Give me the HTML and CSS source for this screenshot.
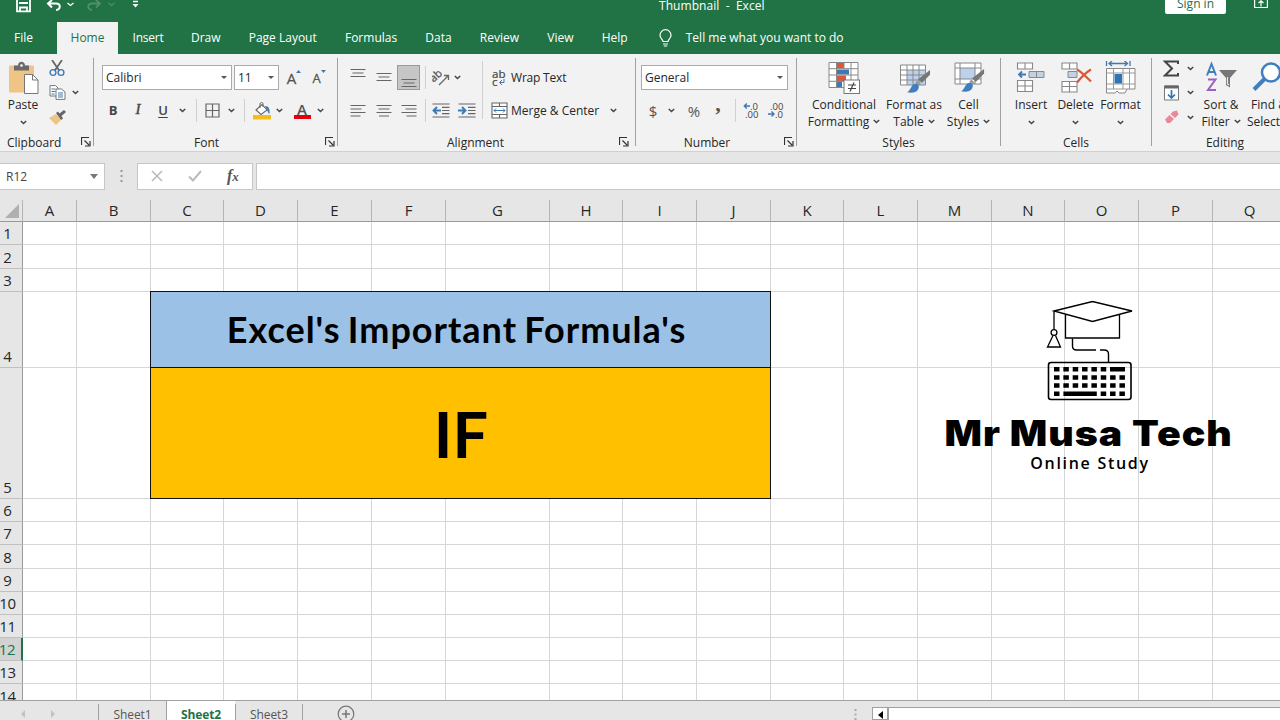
FILE: index.html
```html
<!DOCTYPE html>
<html lang="en">
<head>
    <meta charset="UTF-8">
    <title>Thumbnail - Excel</title>
    <link rel="stylesheet" href="styles.css">
</head>
<body>
    <svg class="defs" width="0" height="0">
        <symbol id="chev" viewBox="0 0 7 5"><path d="M.8 1l2.7 2.5L6.2 1" fill="none" stroke="#444" stroke-width="1.5"/></symbol>
        <symbol id="launch" viewBox="0 0 10 10"><path d="M.5 8V.5H8M3.5 3.5L8 8M9 4v5H4" fill="none" stroke="#333" stroke-width="1.2"/></symbol>
        <symbol id="brush" viewBox="0 0 26 26"><path d="M25 0v5l-9 9-4-4z" fill="#777"/><path d="M11 11l4 4-2 2-4-3z" fill="#999"/><path d="M0 24c4-1 4-8 9-9 3 0 5 3 3 6-2 4-8 4-12 3z" fill="#3f7fbf"/></symbol>
    </svg>

    <header class="titlebar">
        <div class="quick">
            <svg width="15" height="14" viewBox="0 0 15 14"><path d="M1 0v11.300h13V0M4 11V7.500h7v3.500M3 3h9" fill="none" stroke="#fff" stroke-width="1.8"/></svg>
            <svg width="16" height="12" viewBox="0 0 16 12"><path d="M2 3.500h8c5 0 5 6 0 6.500M6 0L2 3.500l4 4" fill="none" stroke="#fff" stroke-width="2"/></svg>
            <svg class="light" width="7" height="5" viewBox="0 0 7 5"><path d="M.5 1l3 2.500 3-2.500" fill="none" stroke="#fff" stroke-width="1.300"/></svg>
            <svg width="16" height="12" viewBox="0 0 16 12"><path d="M14 3.500H6c-5 0-5 6 0 6.500M10 0l4 3.500-4 4" fill="none" stroke="#4f9069" stroke-width="1.800"/></svg>
            <svg class="light" width="7" height="5" viewBox="0 0 7 5"><path d="M.5 1l3 2.500 3-2.500" fill="none" stroke="#4f9069" stroke-width="1.300"/></svg>
            <svg width="7" height="10" viewBox="0 0 7 10"><path d="M1 1.500h5" stroke="#fff" stroke-width="1.500"/><path d="M.5 4h6l-3 3.500z" fill="#fff"/></svg>
        </div>
        <div class="doc-title">Thumbnail&nbsp; -&nbsp; Excel</div>
        <button class="signin">Sign in</button>
        <svg class="ribbon-opt" width="14" height="9" viewBox="0 0 14 9"><path d="M.6 0v7.500h12.800V0M7 6.500V1M4.500 3L7 .800 9.500 3" fill="none" stroke="#fff" stroke-width="1.200"/></svg>
    </header>

    <nav class="tabs">
        <span class="tab">File</span>
        <span class="tab active">Home</span>
        <span class="tab insert">Insert</span>
        <span class="tab">Draw</span>
        <span class="tab">Page Layout</span>
        <span class="tab">Formulas</span>
        <span class="tab">Data</span>
        <span class="tab">Review</span>
        <span class="tab">View</span>
        <span class="tab">Help</span>
        <svg class="bulb" width="13" height="18" viewBox="0 0 13 18"><path d="M4 12.500c0-2-3-3-3-6.300a5.500 5.500 0 0 1 11 0c0 3.300-3 4.300-3 6.300zM4 15h5M4.800 17h3.400" fill="none" stroke="#fff" stroke-width="1.200"/></svg>
        <span class="tell">Tell me what you want to do</span>
    </nav>

    <section class="ribbon">
        <div class="group clipboard">
            <div class="tools">
                <div class="big">
                    <svg width="32" height="33" viewBox="0 0 32 33"><rect x="2" y="4" width="25" height="27" rx="1" fill="#eec584"/><path d="M7 4h4c0-5 7-5 7 0h4v5H7z" fill="#6a6a6a"/><circle cx="14.500" cy="4" r="1.300" fill="#fff"/><path d="M17.500 13h8l5.500 5.500V32H17.500z" fill="#fff" stroke="#777"/><path d="M25.500 13v5.500H31" fill="none" stroke="#777"/></svg>
                    <span>Paste</span>
                    <svg class="chev"><use href="#chev"/></svg>
                </div>
                <div class="small">
                    <svg width="16" height="17" viewBox="0 0 16 17"><path d="M3 0l7.500 11M13 0L5.500 11" stroke="#666" stroke-width="1.800"/><circle cx="4" cy="12.500" r="2.900" fill="none" stroke="#3f78b5" stroke-width="1.400"/><circle cx="12" cy="12.500" r="2.900" fill="none" stroke="#3f78b5" stroke-width="1.400"/></svg>
                    <i></i>
                    <svg width="17" height="15" viewBox="0 0 17 15"><path d="M1 .600h5.500L9 3v8H1z" fill="#fff" stroke="#777"/><path d="M2.500 4h4M2.500 6.500h4M2.500 9h3" stroke="#3f78b5"/><path d="M7 4h5.500L16 7v7.400H7z" fill="#fff" stroke="#777"/><path d="M9 8h5M9 10h5M9 12h5" stroke="#3f78b5"/></svg>
                    <svg class="chev"><use href="#chev"/></svg>
                    <svg width="17" height="15" viewBox="0 0 17 15"><path d="M0 8l7-4 5 6-5 5z" fill="#eec584"/><path d="M7 3l5 7 2-1.500-1.500-2.500L17 2l-2-2-4.500 3.500L9 1.500z" fill="#666"/></svg>
                    <i></i>
                </div>
            </div>
            <div class="caption"><span>Clipboard</span><svg class="launch"><use href="#launch"/></svg></div>
        </div>

        <div class="group font">
            <div class="tools stacked">
                <div class="row font-top">
                    <div class="combo">Calibri<b class="arrow"></b></div>
                    <div class="combo">11<b class="arrow"></b></div>
                    <div class="grow-font">A<svg width="5" height="3" viewBox="0 0 5 3"><path d="M0 3L2.500 0 5 3z" fill="#3f78b5"/></svg></div>
                    <div class="grow-font shrink">A<svg width="5" height="3" viewBox="0 0 5 3"><path d="M0 0l2.500 3L5 0z" fill="#3f78b5"/></svg></div>
                </div>
                <div class="row font-bottom">
                    <span class="fmt bold">B</span>
                    <span class="fmt italic">I</span>
                    <span class="fmt under">U</span>
                    <svg class="chev"><use href="#chev"/></svg>
                    <i class="sep"></i>
                    <svg width="15" height="15" viewBox="0 0 15 15"><path d="M1 1h13v13H1zM7.500 1v13M1 7.500h13" fill="none" stroke="#666" stroke-width="1.200"/></svg>
                    <svg class="chev"><use href="#chev"/></svg>
                    <i class="sep"></i>
                    <svg width="18" height="18" viewBox="0 0 18 18"><path d="M3 8l6-5.500 5 5.500-6 4.500z" fill="#fff" stroke="#666" stroke-width="1.100"/><path d="M7 6V2c0-2 3-2 3 0v3" fill="none" stroke="#666"/><path d="M12 4c4 0 5 3 4.500 8-2-1-1.500-3-2.500-4z" fill="#3f78b5"/><rect x="0" y="13" width="18" height="4.500" fill="#f4be1a"/></svg>
                    <svg class="chev"><use href="#chev"/></svg>
                    <div class="font-color">A</div>
                    <svg class="chev"><use href="#chev"/></svg>
                </div>
            </div>
            <div class="caption"><span>Font</span><svg class="launch"><use href="#launch"/></svg></div>
        </div>

        <div class="group alignment">
            <div class="tools">
                <div class="align-left">
                    <div class="row align-top">
                        <svg width="16" height="20" viewBox="0 0 16 20"><path d="M.5 1.500h15M2.500 5h11M.5 8.500h15" stroke="#666" stroke-width="1.200"/></svg>
                        <svg width="16" height="20" viewBox="0 0 16 20"><path d="M.5 5.500h15M2.500 9h11M.5 12.500h15" stroke="#666" stroke-width="1.200"/></svg>
                        <div class="pressed"><svg width="16" height="20" viewBox="0 0 16 20"><path d="M.5 11.500h15M2.500 15h11M.5 18.500h15" stroke="#666" stroke-width="1.200"/></svg></div>
                        <i class="sep"></i>
                        <svg width="18" height="17" viewBox="0 0 18 17"><text x="0" y="12" transform="rotate(-42 3 11)" font-size="11" fill="#555" stroke="#555" stroke-width=".3">ab</text><path d="M7 16l9-9M12 6.500h4.500V11" fill="none" stroke="#666" stroke-width="1.300"/></svg>
                        <svg class="chev"><use href="#chev"/></svg>
                    </div>
                    <div class="row align-bottom">
                        <svg width="16" height="14" viewBox="0 0 16 14"><path d="M.5 1.500h15M.5 5h11M.5 8.500h15M.5 12h10" stroke="#666" stroke-width="1.200"/></svg>
                        <svg width="16" height="14" viewBox="0 0 16 14"><path d="M.5 1.500h15M2.500 5h11M.5 8.500h15M3 12h10" stroke="#666" stroke-width="1.200"/></svg>
                        <svg width="16" height="14" viewBox="0 0 16 14"><path d="M.5 1.500h15M4.500 5h11M.5 8.500h15M5.500 12h10" stroke="#666" stroke-width="1.200"/></svg>
                        <i class="sep"></i>
                        <svg width="18" height="15" viewBox="0 0 18 15"><path d="M.5 1h17M10 4.300h7.500M10 7.500h7.500M10 10.700h7.500M.5 14h17" stroke="#666" stroke-width="1.200"/><path d="M9 7.500H2M5 4L1.500 7.500 5 11" fill="none" stroke="#3f78b5" stroke-width="1.900"/></svg>
                        <svg width="18" height="15" viewBox="0 0 18 15"><path d="M.5 1h17M10 4.300h7.500M10 7.500h7.500M10 10.700h7.500M.5 14h17" stroke="#666" stroke-width="1.200"/><path d="M0 7.500h7M4 4l3.500 3.500L4 11" fill="none" stroke="#3f78b5" stroke-width="1.900"/></svg>
                    </div>
                </div>
                <div class="align-right">
                    <div class="row wrap-row">
                        <svg width="14" height="18" viewBox="0 0 14 18"><g font-size="11.500" fill="#444" stroke="#444" stroke-width=".2"><text x="0" y="9">ab</text><text x="0" y="17">c</text></g><path d="M12 10v3.500H8M10 11l-2.500 2.500L10 16" fill="none" stroke="#3f78b5"/></svg>
                        <span>Wrap Text</span>
                    </div>
                    <div class="row wrap-row">
                        <svg width="17" height="17" viewBox="0 0 17 17"><path d="M1 1h15v15H1zM1 4.500h15M1 12.500h15M8.500 1v3.500M8.500 12.500V16" fill="#fff" stroke="#666" stroke-width="1.100"/><path d="M3 8.500h11M5 6.500l-2 2 2 2M12 6.500l2 2-2 2" fill="none" stroke="#3f78b5"/></svg>
                        <span>Merge &amp; Center</span>
                        <svg class="chev"><use href="#chev"/></svg>
                    </div>
                </div>
            </div>
            <div class="caption"><span>Alignment</span><svg class="launch"><use href="#launch"/></svg></div>
        </div>

        <div class="group number">
            <div class="tools stacked">
                <div class="row"><div class="combo">General<b class="arrow"></b></div></div>
                <div class="row number-bottom">
                    <span class="sign">$</span>
                    <svg class="chev"><use href="#chev"/></svg>
                    <span class="sign">%</span>
                    <span class="sign comma">,</span>
                    <i class="sep"></i>
                    <svg width="16" height="17" viewBox="0 0 16 17"><g font-size="9.500" fill="#444"><text x="7" y="7.500">.0</text><text x="2" y="15.500">.00</text></g><path d="M7 4H1.500M3.800 1.500L1.300 4l2.500 2.500" fill="none" stroke="#3f78b5" stroke-width="1.400"/></svg>
                    <svg width="16" height="17" viewBox="0 0 16 17"><g font-size="9.500" fill="#444"><text x="2" y="7.500">.00</text><text x="7" y="15.500">.0</text></g><path d="M0 12h5.500M3.500 9.500L6 12l-2.500 2.500" fill="none" stroke="#3f78b5" stroke-width="1.400"/></svg>
                </div>
            </div>
            <div class="caption"><span>Number</span><svg class="launch"><use href="#launch"/></svg></div>
        </div>

        <div class="group styles">
            <div class="tools">
                <div class="big">
                    <svg width="32" height="33" viewBox="0 0 32 33"><rect x="1" y="1" width="29" height="25" fill="#fff"/><rect x="9" y="1" width="7" height="6" fill="#d9583b"/><rect x="9" y="8" width="12" height="5" fill="#3f78b5"/><rect x="9" y="14" width="9" height="6" fill="#d9583b"/><rect x="9" y="20" width="5" height="6" fill="#3f78b5"/><path d="M1 1h29v25H1zM1 7.200h29M1 13.500h29M1 19.800h29M8.500 1v25M23 1v25M16 1v6" fill="none" stroke="#888"/><rect x="16" y="18.500" width="15.500" height="13.500" fill="#fff" stroke="#777"/><path d="M20 23.500h8M20 27h8M26 21l-4 9" stroke="#444" stroke-width="1.200"/></svg>
                    <span>Conditional</span>
                    <span>Formatting <svg class="chev"><use href="#chev"/></svg></span>
                </div>
                <div class="big">
                    <svg width="32" height="33" viewBox="0 0 32 33"><path d="M2.500 3.500h25v20h-25z" fill="#fff"/><path d="M9 8.500h18.500v15H9z" fill="#bcd2ec"/><path d="M2.500 3.500h25v20h-25zM2.500 8.500h25M2.500 13.500h25M2.500 18.500h25M9 3.500v20M15 3.500v20M21 3.500v20" fill="none" stroke="#888"/><use href="#brush" x="9" y="8" width="24" height="25"/></svg>
                    <span>Format as</span>
                    <span>Table <svg class="chev"><use href="#chev"/></svg></span>
                </div>
                <div class="big">
                    <svg width="32" height="33" viewBox="0 0 32 33"><path d="M2 1.500h26v21H2z" fill="#fff"/><path d="M7 6.500h15v11H7z" fill="#bcd2ec"/><path d="M2 1.500h26v21H2zM2 6.500h26M2 17.500h26M7 1.500v21M22 1.500v21" fill="none" stroke="#888"/><use href="#brush" x="8" y="7" width="24" height="25"/></svg>
                    <span>Cell</span>
                    <span>Styles <svg class="chev"><use href="#chev"/></svg></span>
                </div>
            </div>
            <div class="caption"><span>Styles</span></div>
        </div>

        <div class="group cells">
            <div class="tools">
                <div class="big">
                    <svg width="30" height="33" viewBox="0 0 30 33"><path d="M1.500 1.500h15v6h-15zM9 1.500v6M1.500 19h15v11h-15zM9 19v11M1.500 24.500h15" fill="#fff" stroke="#888" stroke-width="1.100"/><path d="M13 10h15v6H13zM20.500 10v6" fill="#c3d2e2" stroke="#888"/><path d="M10 13H3M6 10l-3 3 3 3" fill="none" stroke="#3f78b5" stroke-width="1.800"/></svg>
                    <span>Insert</span>
                    <svg class="chev"><use href="#chev"/></svg>
                </div>
                <div class="big">
                    <svg width="32" height="33" viewBox="0 0 32 33"><path d="M2 1.500h15v6H2zM9.500 1.500v6M2 20h15v10.500H2zM9.500 20v10.500M2 25h15" fill="#fff" stroke="#888" stroke-width="1.100"/><path d="M8 10h9v6H8z" fill="#c3d2e2" stroke="#888"/><path d="M17 8c4 2 9 7 14 12M31 8c-5 3-10 8-14 13" fill="none" stroke="#d9583b" stroke-width="2.200"/></svg>
                    <span>Delete</span>
                    <svg class="chev"><use href="#chev"/></svg>
                </div>
                <div class="big">
                    <svg width="32" height="34" viewBox="0 0 32 34"><path d="M1.500 0v5M25 0v5M4 2.500h19M7 0L4 2.500 7 5M19.500 0l3 2.500-3 2.500" fill="none" stroke="#3f78b5" stroke-width="1.300"/><path d="M1.500 7.500H30v20.500H22l-2 4H14l-2-2-2 2H1.500z" fill="#fff" stroke="#888"/><path d="M1.500 12h28.500M1.500 23h28.500M8.500 7.500V28M18 7.500V28M24.500 7.500V28M1.500 28H22" fill="none" stroke="#999"/><rect x="9.500" y="13" width="7.500" height="9.500" fill="#2f75b5"/></svg>
                    <span>Format</span>
                    <svg class="chev"><use href="#chev"/></svg>
                </div>
            </div>
            <div class="caption"><span>Cells</span></div>
        </div>

        <div class="group editing">
            <div class="tools">
                <div class="small">
                    <svg width="17" height="17" viewBox="0 0 17 17"><path d="M15 4V1.500H2L9 8.500 2 15.500h13V13" fill="none" stroke="#444" stroke-width="2"/></svg>
                    <svg class="chev"><use href="#chev"/></svg>
                    <svg width="15" height="16" viewBox="0 0 15 16"><path d="M.5 1h14v14H.5z" fill="#fff" stroke="#777"/><path d="M.5.500h14v3H.5z" fill="#666"/><path d="M7.500 5v8M4 9.500L7.500 13 11 9.500" fill="none" stroke="#2f75b5" stroke-width="1.700"/></svg>
                    <svg class="chev"><use href="#chev"/></svg>
                    <svg width="15" height="14" viewBox="0 0 15 14"><path d="M9 1.500l4-1 1.500 4L11 8 6.500 4z" fill="#e8899a"/><path d="M5.500 5l4.500 4-4 4H3L1 9.500z" fill="#e8899a"/></svg>
                    <svg class="chev"><use href="#chev"/></svg>
                </div>
                <div class="big sort">
                    <svg width="32" height="33" viewBox="0 0 32 33"><path d="M2 14L6.500 2.500 11 14M3.500 10.500h6" fill="none" stroke="#3f7fc0" stroke-width="2"/><path d="M3 18h7.500L3 28.500h8" fill="none" stroke="#9a5fc0" stroke-width="2"/><path d="M14 8.500h18l-7 8V26l-4-2.500v-7z" fill="#777"/><path d="M22.500 15.500v7l1.500 1" fill="none" stroke="#eee" stroke-width="1.200"/></svg>
                    <span>Sort &amp;</span>
                    <span>Filter <svg class="chev"><use href="#chev"/></svg></span>
                </div>
                <div class="big find">
                    <svg width="34" height="33" viewBox="0 0 34 33"><circle cx="19" cy="11" r="9" fill="#fff" stroke="#3f7fc0" stroke-width="2.500"/><path d="M12.500 17.500L2 28" stroke="#3f7fc0" stroke-width="4"/></svg>
                    <span>Find &amp;</span>
                    <span>Select <svg class="chev"><use href="#chev"/></svg></span>
                </div>
            </div>
            <div class="caption"><span>Editing</span></div>
        </div>
    </section>

    <section class="formula-bar">
        <div class="name-box">R12<b class="arrow big-arrow"></b></div>
        <svg class="dots" width="3" height="14" viewBox="0 0 3 14"><path d="M1.500 1v12" stroke="#999" stroke-width="2" stroke-dasharray="2 3"/></svg>
        <div class="fx-box">
            <svg width="12" height="12" viewBox="0 0 12 12"><path d="M1 1l10 10M11 1L1 11" stroke="#bbb" stroke-width="1.600"/></svg>
            <svg width="14" height="12" viewBox="0 0 14 12"><path d="M1 6.500L5 10.500 13 1" fill="none" stroke="#bbb" stroke-width="2"/></svg>
            <span class="fx">f<small>x</small></span>
        </div>
        <div class="formula-input"></div>
    </section>

    <main class="sheet">
        <div class="grid" id="grid"></div>
        <div class="logo">
            <svg width="90" height="104" viewBox="0 0 90 104" fill="none" stroke="#000" stroke-width="1.300">
                <path d="M8 11L46.500 1.500 86 11 46.500 21.500zM19.500 14.500V38H73.500V14.500M8 11v18.500"/>
                <circle cx="8" cy="32.500" r="2.900"/>
                <path d="M7 35.500L1.500 47H14.500L9.500 35.500"/>
                <path d="M26.500 38.500V46q0 4 4 4H50M54 50h4q4.500 0 4.500 4v8" stroke-width="1.400"/>
                <rect x="2.500" y="62.500" width="82.500" height="37" rx="2.500" stroke-width="1.600"/>
                <g stroke-width="4.600" stroke-dasharray="5.5 3.85">
                    <path d="M8 69.300h52.300"/>
                    <path d="M8 77.500h71"/>
                    <path d="M8 85.500h71"/>
                    <path d="M54.700 93.800h24.300"/>
                </g>
                <path d="M64 69.300h15M8 93.800h5.500M17.400 93.800h33.400" stroke-width="4.600"/>
            </svg>
            <div class="logo-name">Mr Musa Tech</div>
            <div class="logo-sub">Online Study</div>
        </div>
    </main>

    <footer class="sheet-tabs">
        <div class="nav-arrows"><i class="prev"></i><i class="next"></i></div>
        <span class="sheet-tab">Sheet1</span>
        <span class="sheet-tab current">Sheet2</span>
        <span class="sheet-tab">Sheet3</span>
        <svg class="add" width="18" height="18" viewBox="0 0 18 18"><circle cx="9" cy="9" r="7.800" fill="none" stroke="#777" stroke-width="1.200"/><path d="M9 5v8M5 9h8" stroke="#777" stroke-width="1.500"/></svg>
        <svg class="dots" width="3" height="14" viewBox="0 0 3 14"><path d="M1.500 1v12" stroke="#aaa" stroke-width="2" stroke-dasharray="2 2.500"/></svg>
        <div class="scroll-btn"><i></i></div>
        <div class="scroll-track"></div>
    </footer>

    <script src="script.js"></script>
</body>
</html>
```
FILE: styles.css
```css
* {
    box-sizing: border-box;
}

body {
    margin: 0;
    width: 1280px;
    height: 720px;
    overflow: hidden;
    display: flex;
    flex-direction: column;
    background: #e6e6e6;
    color: #262626;
    font-family: "Open Sans", "Noto Sans", sans-serif;
    font-size: 12px;
}

svg {
    display: block;
    flex: none;
}

.defs {
    position: absolute;
}

/* title bar */
.titlebar {
    flex: none;
    height: 22px;
    display: flex;
    align-items: flex-start;
    background: #217346;
    color: #fff;
}

.quick {
    width: 659px;
    display: flex;
    padding-left: 16px;
}

.quick svg:nth-child(2) { margin-left: 15px; }
.quick svg:nth-child(3) { margin: 2px 0 0 5px; }
.quick svg:nth-child(4) { margin-left: 12px; }
.quick svg:nth-child(5) { margin: 2px 0 0 6px; }
.quick svg:nth-child(6) { margin-left: 17px; }

.doc-title {
    width: 506px;
    margin-top: -3px;
    line-height: 18px;
    letter-spacing: .05px;
}

.signin {
    width: 61px;
    height: 20px;
    margin-top: -6px;
    padding: 0;
    border: 0;
    border-radius: 2px;
    background: #fff;
    color: #217346;
    font: inherit;
    line-height: 20px;
}

.ribbon-opt {
    margin-left: 28px;
}

/* tabs */
.tabs {
    flex: none;
    height: 32px;
    display: flex;
    background: #217346;
    color: #fff;
    line-height: 32px;
    white-space: nowrap;
}

.tab {
    padding: 0 14.100px;
}

.tab:first-child {
    width: 57px;
    padding-left: 14px;
}

.tab.active {
    width: 61px;
    padding: 0;
    text-align: center;
    background: #f2f2f2;
    color: #217346;
}

.tab.insert {
    padding: 0 13.200px 0 14.500px;
    letter-spacing: -.2px;
}

.bulb {
    margin: 7px 14px 0 17px;
}

/* ribbon */
.ribbon {
    flex: none;
    height: 98px;
    display: flex;
    background: #f2f2f2;
    border-bottom: 1px solid #d0d0d0;
}

.group {
    flex: none;
    display: flex;
    flex-direction: column;
    background: linear-gradient(#a0a0a0, #a0a0a0) right 4px / 1px 88px no-repeat;
}

.group.clipboard { width: 94px; }
.group.font { width: 244px; }
.group.alignment { width: 298px; }
.group.number { width: 161px; }
.group.styles { width: 204px; }
.group.cells { width: 151px; }
.group.editing { width: 147px; background: none; }

.tools {
    height: 79px;
    display: flex;
    padding-top: 7px;
}

.tools.stacked {
    flex-direction: column;
    padding-left: 8px;
}

.number .tools.stacked {
    padding-left: 5px;
}

.caption {
    height: 18px;
    display: flex;
    align-items: center;
}

.caption span {
    flex: 1;
    text-align: center;
    margin-left: -1px;
}

.clipboard .caption span {
    text-align: left;
    padding-left: 8px;
}

.launch {
    width: 10px;
    height: 10px;
    margin-right: 3px;
}

.caption .launch {
    margin-left: 5px;
}

.alignment .launch {
    margin-right: 7px;
}

.chev {
    width: 7px;
    height: 5px;
}

.row {
    height: 33px;
    display: grid;
    align-items: center;
    justify-items: center;
}

.sep {
    width: 1px;
    height: 23px;
    background: #d0d0d0;
}

.font-top { grid-template-columns: 130px 2px 45px 30px 20px; }
.font-bottom { grid-template-columns: 22px 28px 22px 17px 10px 22px 16px 10px 25px 11px 34px 3px; }
.align-top { grid-template-columns: 27px 25px 25px 8px 24px 9px; }
.align-bottom { grid-template-columns: 27px 25px 25px 8px 24px 28px; }
.wrap-row { grid-template-columns: 24px 95px 11px; }
.number-bottom { grid-template-columns: 24px 12px 34px 14px 20px 12px 38px; }

.font-top .combo:nth-child(2) {
    grid-column: 3;
}

.font-top .grow-font {
    grid-column: 4;
}

.font-top .shrink {
    grid-column: 5;
}

.combo {
    width: 100%;
    height: 25px;
    display: flex;
    align-items: center;
    justify-content: space-between;
    padding: 0 4px 0 3px;
    border: 1px solid #ababab;
    background: #fff;
}

.number .combo {
    width: 147px;
    justify-self: start;
}

.arrow {
    border: 3px solid transparent;
    border-top-color: #555;
    border-bottom: 0;
}

.grow-font {
    display: flex;
    align-items: flex-start;
    font-size: 15px;
    line-height: 20px;
    color: #555;
    -webkit-text-stroke: .3px #555;
}

.grow-font svg {
    margin-top: 2px;
}

.shrink {
    font-size: 13px;
}

.fmt {
    font-size: 13px;
    margin-top: -2px;
    color: #444;
}

.bold {
    font-weight: 700;
}

.italic {
    font-family: "Liberation Serif", serif;
    font-style: italic;
    font-size: 15px;
    -webkit-text-stroke: .4px #444;
}

.under {
    font-weight: 600;
    text-decoration: underline;
    text-underline-offset: 2px;
}

.font-color {
    width: 17px;
    height: 16px;
    border-bottom: 4px solid #e3000b;
    color: #555;
    font-size: 15px;
    font-weight: 600;
    line-height: 12px;
    text-align: center;
}

.pressed {
    width: 23px;
    height: 25px;
    display: flex;
    align-items: center;
    justify-content: center;
    border: 1px solid #9a9a9a;
    background: #c6c6c6;
}

.align-left {
    width: 144px;
    padding-left: 6px;
}

.align-right {
    height: 58px;
    padding-left: 4px;
    border-left: 1px solid #d0d0d0;
}

.align-right span {
    justify-self: start;
    white-space: nowrap;
}

.align-right .row:first-child span {
    letter-spacing: -.2px;
}

.align-right .chev {
    justify-self: end;
}

.sign {
    font-size: 15px;
    color: #555;
}

.comma {
    font-family: "Liberation Serif", serif;
    font-weight: 700;
    font-size: 22px;
    line-height: 14px;
    margin-top: -13px;
}

/* tall buttons: icon over one or two text lines */
.big {
    display: flex;
    flex-direction: column;
    align-items: center;
    white-space: nowrap;
}

.big > svg:first-child {
    height: 34px;
}

.big > span {
    height: 17px;
    display: flex;
    align-items: center;
    gap: 4px;
    line-height: 17px;
}

.big > span:nth-child(2) {
    margin-top: 1px;
}

.big > .chev {
    margin-top: 7px;
}

.clipboard .big { width: 46px; }
.styles .big:nth-child(1) { width: 94px; }
.styles .big:nth-child(2) { width: 46px; }
.styles .big:nth-child(3) { width: 63px; }
.cells .big:nth-child(1) { width: 60px; }
.cells .big:nth-child(2) { width: 29px; }
.cells .big:nth-child(3) { width: 61px; }
.editing .sort { width: 46px; }
.editing .find { width: 50px; }

.small {
    height: 72px;
    display: grid;
    grid-template-columns: 22px 15px;
    grid-auto-rows: 24.500px;
    align-items: center;
    justify-items: center;
    margin-top: -5px;
}

.editing .small {
    width: 46px;
    grid-template-columns: 22px 16px;
    padding-left: 8px;
}

/* formula bar */
.formula-bar {
    flex: none;
    height: 48px;
    display: flex;
    align-items: center;
}

.name-box,
.fx-box,
.formula-input {
    height: 27px;
    display: flex;
    align-items: center;
    background: #fff;
    border: 1px solid #c6c6c6;
}

.name-box {
    width: 106px;
    margin-left: -1px;
    justify-content: space-between;
    padding: 0 6px 0 6px;
    color: #444;
}

.big-arrow {
    border-width: 5px 4px 0;
    border-top-color: #777;
}

.formula-bar .dots {
    margin: 0 14px 0 15px;
}

.fx-box {
    width: 116px;
    padding-left: 13px;
}

.fx-box svg:nth-child(2) {
    margin-left: 25px;
}

.fx {
    margin-left: 25px;
    font-family: "Liberation Serif", serif;
    font-style: italic;
    font-weight: 700;
    font-size: 16px;
    color: #555;
}

.fx small {
    font-size: 13px;
}

.formula-input {
    flex: 1;
    margin-left: 3px;
    border-right: 0;
}

/* sheet */
.sheet {
    position: relative;
    flex: none;
    height: 500px;
    overflow: hidden;
    background: #fff;
}

.line {
    display: grid;
    grid-template-columns: 23px 54px 74px 73px 74px 74px 74px 104px 73px 74px 74px 73px 74px 74px 73px 74px 74px 74px;
}

.cell {
    border-right: 1px solid #d6d6d6;
    border-bottom: 1px solid #d6d6d6;
}

.col-head,
.row-head,
.corner {
    background: #e6e6e6;
    border-right: 1px solid #b4b4b4;
    border-bottom: 1px solid #9a9a9a;
    font-size: 15px;
}

.col-head {
    line-height: 20px;
    text-align: center;
}

.corner {
    display: flex;
    align-items: flex-end;
    justify-content: flex-end;
    padding: 0 3px 3px 0;
}

.corner i {
    border: 7px solid #b0b0b0;
    border-top-color: transparent;
    border-left-color: transparent;
}

.row-head {
    display: flex;
    align-items: flex-end;
    justify-content: center;
    padding-right: 7px;
    border-right-color: #9a9a9a;
    border-bottom-color: #c0c0c0;
    line-height: 22px;
    letter-spacing: -.3px;
}

.row-head.selected {
    background: #d2d2d2;
    color: #217346;
    border-right: 2px solid #217346;
}

.merged {
    position: relative;
    grid-column: span 8;
    display: flex;
    align-items: center;
    justify-content: center;
    border-right: 1px solid #111;
    border-bottom: 1px solid #111;
    box-shadow: -1px 0 #111, 0 -1px #111, -1px -1px #111;
    color: #000;
    font-family: Lato, sans-serif;
    font-weight: 700;
}

.merged.title {
    background: #9bc2e6;
    padding: 0 8px 2px 0;
    font-size: 36px;
    letter-spacing: 1px;
    word-spacing: -2.500px;
}

.merged.name {
    background: #ffc000;
    padding-left: 1px;
    font-size: 63px;
}

/* picture floating over the cells */
.logo {
    position: absolute;
    left: 945px;
    top: 100px;
    width: 288px;
    display: flex;
    flex-direction: column;
    align-items: center;
    color: #000;
    white-space: nowrap;
}

.logo svg {
    margin-left: 4px;
}

.logo-name {
    font-family: Inter, sans-serif;
    font-weight: 900;
    font-size: 35px;
    line-height: 40px;
    letter-spacing: .9px;
    margin-top: 9px;
    transform: scaleX(1.12);
}

.logo-sub {
    font-size: 16px;
    font-weight: 600;
    line-height: 20px;
    letter-spacing: 1.700px;
    margin: 0 0 0 2px;
}

/* sheet tabs */
.sheet-tabs {
    flex: none;
    height: 20px;
    display: flex;
    overflow: hidden;
    border-top: 1px solid #a0a0a0;
    color: #555;
    line-height: 27px;
}

.nav-arrows {
    width: 98px;
    display: flex;
    gap: 26px;
    padding: 9px 0 0 21px;
}

.nav-arrows i {
    height: 8px;
    border: 4px solid transparent;
}

.nav-arrows .prev {
    border-right-color: #c2c2c2;
    border-left: 0;
}

.nav-arrows .next {
    border-left-color: #c2c2c2;
    border-right: 0;
}

.sheet-tab {
    width: 68px;
    height: 26px;
    margin-top: 3px;
    line-height: 21px;
    text-align: center;
    border-left: 1px solid #a0a0a0;
    letter-spacing: -.1px;
}

.sheet-tab:last-of-type {
    border-right: 1px solid #a0a0a0;
}

.sheet-tab.current {
    width: 69px;
    margin-top: -1px;
    line-height: 29px;
    background: #fff;
    color: #217346;
    font-weight: 700;
}

.add {
    margin: 4px 0 0 34px;
}

.sheet-tabs .dots {
    margin: 7px 15px 0 499px;
}

.scroll-btn {
    width: 16px;
    margin-top: 6px;
    padding: 3px 0 0 5px;
    border: 1px solid #a0a0a0;
    background: #fff;
}

.scroll-btn i {
    display: block;
    width: 0;
    border: 4px solid transparent;
    border-right: 5px solid #000;
    border-left: 0;
}

.scroll-track {
    flex: 1;
    margin-top: 6px;
    border-top: 1px solid #a0a0a0;
    border-left: 1px solid #a0a0a0;
    background: #fff;
}
```
FILE: script.js
```js
const grid = document.getElementById('grid');
const cols = 'ABCDEFGHIJKLMNOPQ'.split('');
const heights = [23, 24, 23, 76, 131, 23, 23, 24, 23, 23, 23, 23, 23, 24];
const merged = {
    4: ['title', "Excel's Important Formula's"],
    5: ['name', 'IF']
};

function addCell(line, className, text) {
    const cell = document.createElement('div');
    cell.className = className;
    cell.textContent = text || '';
    line.appendChild(cell);
    return cell;
}

function addLine(height) {
    const line = document.createElement('div');
    line.className = 'line';
    line.style.height = height + 'px';
    grid.appendChild(line);
    return line;
}

const head = addLine(22);
addCell(head, 'corner').appendChild(document.createElement('i'));
cols.forEach(c => addCell(head, 'col-head', c));

heights.forEach((h, i) => {
    const row = i + 1;
    const line = addLine(h);
    addCell(line, row === 12 ? 'row-head selected' : 'row-head', String(row));
    for (let c = 0; c < cols.length; c++) {
        if (merged[row] && c === 2) {
            addCell(line, 'merged ' + merged[row][0], merged[row][1]);
            c += 7;
        } else {
            addCell(line, 'cell');
        }
    }
});
```
